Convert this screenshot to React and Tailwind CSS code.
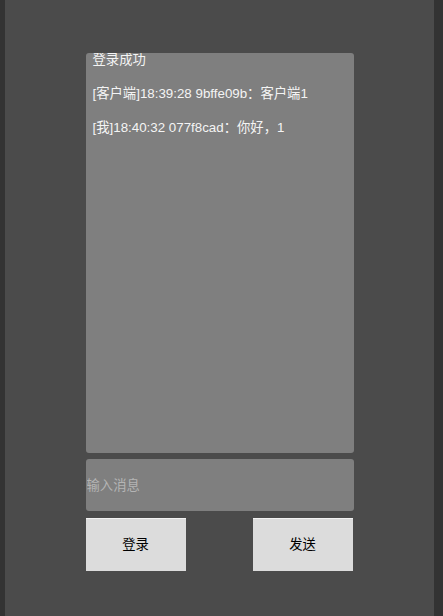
import { useState } from "react";

const messages = [
  "登录成功",
  "[客户端]18:39:28 9bffe09b：客户端1",
  "[我]18:40:32 077f8cad：你好，1",
];

export default function App() {
  const [text, setText] = useState("");

  return (
    <div
      className="flex h-[616px] w-[443px] bg-[#333333]"
      style={{ fontFamily: '"Liberation Sans", "Noto Sans CJK SC", sans-serif' }}
    >
      <div className="ml-[5px] mr-[9px] flex-1 bg-[#4b4b4b] pt-[53px]">
        <div className="mx-auto flex w-[268px] flex-col">
          <div className="h-[400px] overflow-hidden rounded-[3px] bg-[#7f7f7f]">
            <div className="-mt-px flex flex-col gap-[19px] pl-[7px] text-[13.33px] leading-[15px] text-[#f4f4f4]">
              {messages.map((m, i) => (
                <div key={i}>{m}</div>
              ))}
            </div>
          </div>
          <input
            value={text}
            onChange={(e) => setText(e.target.value)}
            placeholder="输入消息"
            className="mt-[6px] h-[52px] rounded-[3px] bg-[#7f7f7f] pl-px text-[13.33px] text-[#f4f4f4] outline-none placeholder:text-[#b4b4b4]"
          />
          <div className="mt-[7px] flex justify-between pr-px">
            <button className="h-[53px] w-[100px] border-t border-[#f2f2f2] bg-[#dcdcdc] text-[13.33px] text-black">
              登录
            </button>
            <button className="h-[53px] w-[100px] border-t border-[#f2f2f2] bg-[#dcdcdc] text-[13.33px] text-black">
              发送
            </button>
          </div>
        </div>
      </div>
    </div>
  );
}
